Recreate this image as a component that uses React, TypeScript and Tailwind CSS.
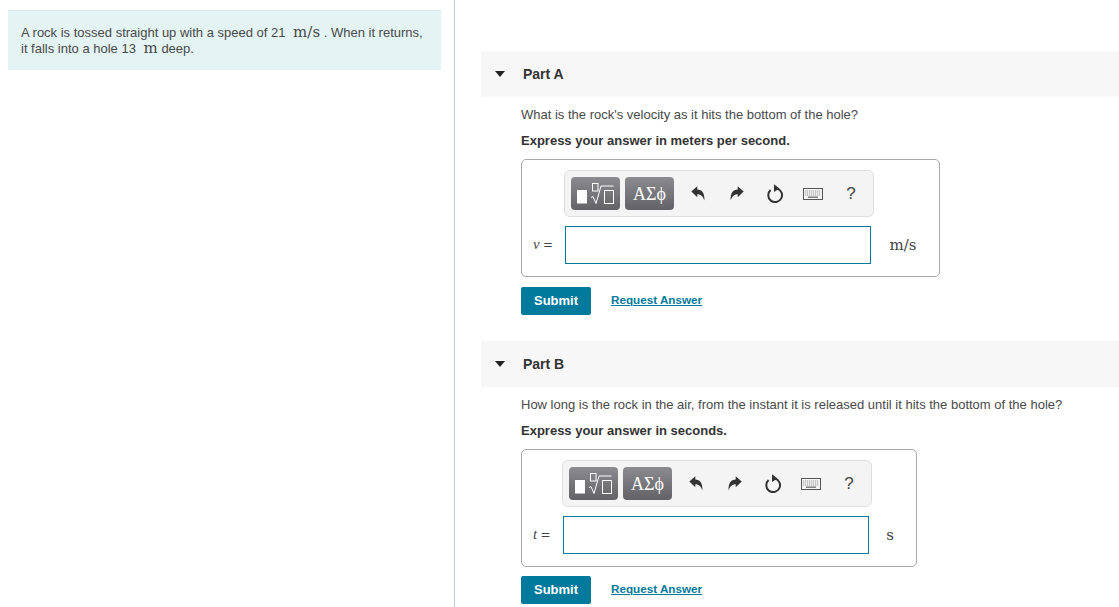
const sans = "font-['Liberation_Sans',Arial,sans-serif]";
const serif = "font-['DejaVu_Serif','Liberation_Serif',serif]";

function Caret() {
  return (
    <svg width="10" height="6" viewBox="0 0 10 6" className="shrink-0">
      <path d="M0 0H10L5 6Z" fill="#222" />
    </svg>
  );
}

function TemplateIcon() {
  return (
    <svg width="37" height="26" viewBox="0 0 37 26">
      <rect x="0" y="9" width="10" height="13.5" fill="#fff" />
      <rect x="15.5" y="2.5" width="5.5" height="7.5" fill="none" stroke="#fff" strokeWidth="1" />
      <path d="M14 16.5l2 -1 3 7 5 -17.5h12.5" fill="none" stroke="#fff" strokeWidth="1" />
      <rect x="27.5" y="9.5" width="9" height="13" fill="none" stroke="#fff" strokeWidth="1" />
    </svg>
  );
}

function Undo({ flip }: { flip?: boolean }) {
  return (
    <svg width="14" height="15" viewBox="0 0 14 15" className={flip ? '-scale-x-100' : ''}>
      <path d="M0.3 5.4L6.3 0.3V3.4C11 3.4 13.8 7 13.4 14.6C12.3 10.6 10 8.3 6.3 8.3V11.2Z" fill="#333" />
    </svg>
  );
}

function Reset() {
  return (
    <svg width="17" height="19" viewBox="0 0 17 19">
      <path d="M10.2 4.6A6.9 6.9 0 1 1 3.6 6" fill="none" stroke="#333" strokeWidth="2" />
      <path d="M7 0.3L12.5 4.6L7 8Z" fill="#333" />
    </svg>
  );
}

function Keyboard() {
  return (
    <svg width="20" height="12" viewBox="0 0 20 12">
      <rect x="0.5" y="0.5" width="19" height="11" fill="#f4f4f4" stroke="#555" />
      <path d="M2 3h16M2 5h16M2 7h16" stroke="#999" strokeWidth="1" strokeDasharray="1.2 0.8" />
      <path d="M5 9.2h10" stroke="#777" strokeWidth="1.4" />
    </svg>
  );
}

function MathButton({ children }: { children: React.ReactNode }) {
  return (
    <div className="h-[33px] w-[49px] rounded-[4px] bg-gradient-to-b from-[#8c8c90] to-[#636367] flex items-center justify-center">
      {children}
    </div>
  );
}

function Toolbar() {
  return (
    <div className="-ml-px w-[310px] h-[47px] rounded-[6px] border border-[#dedede] bg-[#f4f4f4] pl-[6px] flex items-center">
      <MathButton>
        <TemplateIcon />
      </MathButton>
      <div className="ml-[5px]">
        <MathButton>
          <span className="font-['Liberation_Serif',serif] text-white text-[18px] leading-none">ΑΣϕ</span>
        </MathButton>
      </div>
      <div className="ml-[5px] flex items-center">
        <div className="w-[38px] flex justify-center"><Undo /></div>
        <div className="w-[38px] flex justify-center pl-px"><Undo flip /></div>
        <div className="w-[38px] flex justify-center pl-[3px]"><Reset /></div>
        <div className="w-[38px] flex justify-center pl-[2px]"><Keyboard /></div>
        <div className="w-[38px] flex justify-center pl-[2px] text-[17px] text-[#444]">?</div>
      </div>
    </div>
  );
}

function Part(props: {
  title: string;
  question: string;
  hint: string;
  symbol: string;
  unit: string;
  boxWidth: string;
  labelWidth: string;
  unitWidth: string;
  submitGap: string;
}) {
  return (
    <section className="mb-[26px]">
      <div className="h-[46px] bg-[#f7f7f7] flex items-center pl-[14px]">
        <Caret />
        <h2 className="ml-[18px] text-[14px] font-bold text-[#333]">{props.title}</h2>
      </div>
      <div className="pl-[40px]">
        <p className="mt-[10px] h-[16px] leading-[16px] text-[#494949] text-[13px]">{props.question}</p>
        <p className="mt-[10px] h-[16px] leading-[16px] font-bold text-[#333] text-[13px]">{props.hint}</p>
        <div className={`mt-[10px] ${props.boxWidth} h-[118px] rounded-[5px] border border-[#aaa] pt-[10px] flex`}>
          <div className={`${props.labelWidth} shrink-0 pt-[63px] pl-[11px] text-[12px] text-[#444] whitespace-nowrap`}>
            <span className="font-['Liberation_Serif',serif] italic text-[15px]">{props.symbol}</span>{' '}
            <span className={serif}>=</span>
          </div>
          <div className="w-[306px] shrink-0">
            <Toolbar />
            <div className="mt-[9px] h-[38px] border border-[#007a9c] bg-white" />
          </div>
          <div className={`${props.unitWidth} shrink-0 pt-[67px] text-center ${serif} text-[15px] leading-[16px] text-[#444]`}>
            {props.unit}
          </div>
        </div>
        <div className={`${props.submitGap} flex items-center`}>
          <button className="w-[70px] h-[28px] rounded-[2px] bg-[#007a9c] text-white font-bold text-[13px]">Submit</button>
          <a className="ml-[20px] -mt-[2px] text-[11.7px] font-bold text-[#007a9c] underline">Request Answer</a>
        </div>
      </div>
    </section>
  );
}

export default function App() {
  return (
    <div className={`${sans} h-[607px] w-[1119px] overflow-hidden bg-white flex`}>
      {/* Intro */}
      <aside className="w-[455px] shrink-0 border-r border-[#b9cfdd] pl-[8px] pr-[13px] pt-[10px]">
        <div className="h-[60px] bg-[#e4f4f4] border-t border-[#dde6e8] pl-[13px] pt-[14px] text-[13px] leading-[16px] text-[#494949]">
          <p className="h-[16px] whitespace-nowrap">
            A rock is tossed straight up with a speed of 21{' '}
            <span className={`${serif} ml-[4px] text-[15px] leading-none`}>m/s</span> . When it returns,
          </p>
          <p className="h-[16px] whitespace-nowrap">
            it falls into a hole 13{' '}
            <span className={`${serif} ml-[4px] text-[15px] leading-none`}>m</span> deep.
          </p>
        </div>
      </aside>

      {/* Parts */}
      <main className="flex-1 pl-[26px] pt-[51px]">
        <Part
          title="Part A"
          question="What is the rock's velocity as it hits the bottom of the hole?"
          hint="Express your answer in meters per second."
          symbol="v"
          unit="m/s"
          boxWidth="w-[419px]"
          labelWidth="w-[43px]"
          unitWidth="w-[64px]"
          submitGap="mt-[10px]"
        />
        <Part
          title="Part B"
          question="How long is the rock in the air, from the instant it is released until it hits the bottom of the hole?"
          hint="Express your answer in seconds."
          symbol="t"
          unit="s"
          boxWidth="w-[396px]"
          labelWidth="w-[41px]"
          unitWidth="w-[42px]"
          submitGap="mt-[9px]"
        />
      </main>
    </div>
  );
}
